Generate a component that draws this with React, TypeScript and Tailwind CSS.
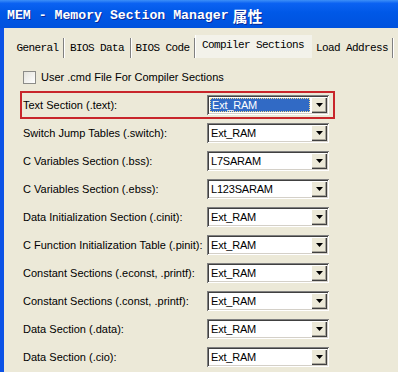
import React from "react";

// Classic XP-style property sheet: title bar, tab strip, and a list of
// section -> memory region combo boxes.

const tabs = [
  { label: "General", w: "w-[52px]" },
  { label: "BIOS Data", w: "w-[67px]" },
  { label: "BIOS Code", w: "w-[64px]" },
  { label: "Compiler Sections", w: "w-[117px]", active: true },
  { label: "Load Address", w: "w-[81px]" },
];

const sections = [
  { label: "Text Section (.text):", value: "Ext_RAM", focused: true },
  { label: "Switch Jump Tables (.switch):", value: "Ext_RAM" },
  { label: "C Variables Section (.bss):", value: "L7SARAM" },
  { label: "C Variables Section (.ebss):", value: "L123SARAM" },
  { label: "Data Initialization Section (.cinit):", value: "Ext_RAM" },
  { label: "C Function Initialization Table (.pinit):", value: "Ext_RAM" },
  { label: "Constant Sections (.econst, .printf):", value: "Ext_RAM" },
  { label: "Constant Sections (.const, .printf):", value: "Ext_RAM" },
  { label: "Data Section (.data):", value: "Ext_RAM" },
  { label: "Data Section (.cio):", value: "Ext_RAM" },
];

const uiFont = "font-['Liberation_Sans',Arial,sans-serif] text-[11px]";

function Combo({ value, focused }: { value: string; focused?: boolean }) {
  return (
    <div className="flex h-[20px] w-[122px] items-stretch bg-white p-[2px] shadow-[inset_1px_1px_0_#808080,inset_-1px_-1px_0_#ffffff,inset_2px_2px_0_#404040,inset_-2px_-2px_0_#d4d0c8]">
      <div className="flex flex-1 items-center p-[1px]">
        <div
          className={
            focused
              ? "flex h-full w-full items-center border border-dotted border-[#f6d88c] bg-[#316ac5] pl-[1px] text-white"
              : "flex h-full w-full items-center pl-[1px] text-black"
          }
        >
          <span className={`${uiFont} tracking-[-0.2px]`}>{value}</span>
        </div>
      </div>
      <div className="flex w-[16px] items-center justify-center bg-[#ece9d8] shadow-[inset_1px_1px_0_#ffffff,inset_-1px_-1px_0_#404040,inset_-2px_-2px_0_#a9a69b]">
        <svg width="7" height="4" viewBox="0 0 7 4">
          <path d="M0 0h7L3.5 4z" fill="#000" />
        </svg>
      </div>
    </div>
  );
}

export default function App() {
  return (
    <div className="flex h-[372px] w-[398px] flex-col overflow-hidden bg-[#ece9d8]">
      <div className="flex h-[28px] items-center bg-[linear-gradient(to_bottom,#3d8ff7_0%,#0b62f2_12%,#0058e7_45%,#0052dd_100%)] pl-[7px] pt-[3px]">
        <span className="font-['Liberation_Mono',monospace] text-[13.2px] font-bold text-white [text-shadow:1px_1px_0_#0a2a9a]">
          MEM - Memory Section Manager
        </span>
        <span className="ml-[4px] font-['Noto_Sans_CJK_SC',sans-serif] text-[15px] font-bold leading-none text-white [text-shadow:1px_1px_0_#0a2a9a]">
          属性
        </span>
      </div>

      <div className="flex flex-1">
        <div className="w-[4px] bg-[#0b52e6]" />
        <div className="flex flex-1 flex-col">
          <div className="mt-[7px] flex h-[23px] pl-[8px]">
            {tabs.map((t) => (
              <div
                key={t.label}
                className={
                  t.active
                    ? `${t.w} flex items-start justify-center border-l border-white bg-[#f3f2ea] pt-[2px] pr-[2px]`
                    : `${t.w} mt-[3px] flex items-start justify-center border-r border-[#808080] pt-[2px] shadow-[1px_0_0_#ffffff]`
                }
              >
                <span className="font-['Liberation_Mono',monospace] text-[11px] tracking-[-0.6px] text-black">
                  {t.label}
                </span>
              </div>
            ))}
          </div>

          <div className="flex flex-col pt-[5px]">
            <div className="flex h-[28px] items-center pl-[19px]">
              <div className="h-[13px] w-[13px] border border-[#8c8c88] bg-[linear-gradient(135deg,#e4e3dc,#ffffff)]" />
              <span className={`${uiFont} ml-[5px] text-black`}>User .cmd File For Compiler Sections</span>
            </div>

            {sections.map((s) =>
              s.focused ? (
                <div key={s.label} className="ml-[16px] flex h-[28px] w-[315px] items-center border-2 border-[#c8262b] pl-[1px]">
                  <span className={`${uiFont} w-[184px] text-black`}>{s.label}</span>
                  <Combo value={s.value} focused />
                </div>
              ) : (
                <div key={s.label} className="flex h-[28px] items-center pl-[19px]">
                  <span className={`${uiFont} w-[184px] text-black`}>{s.label}</span>
                  <Combo value={s.value} />
                </div>
              )
            )}
          </div>
        </div>
      </div>
    </div>
  );
}
